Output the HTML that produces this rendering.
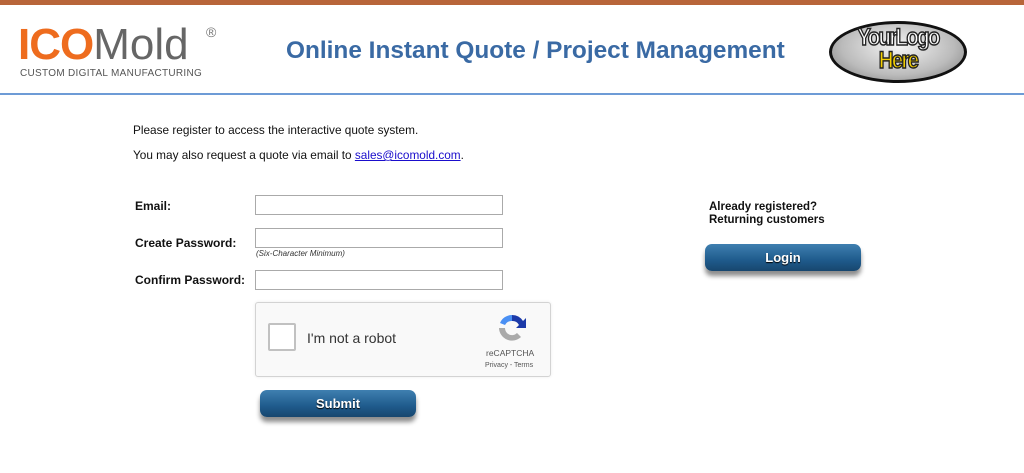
<!DOCTYPE html>
<html><head><style>
body{margin:0;width:1024px;height:473px;background:#fff;font-family:"Liberation Sans",Arial,sans-serif;position:relative;overflow:hidden}
.a{position:absolute}
.top{left:0;top:0;width:1024px;height:5px;background:#b8653a}
.hl{left:0;top:93px;width:1024px;height:2px;background:#6d9bd6}
.t{font-size:11.8px;color:#111}
.lb{font-size:12px;font-weight:bold;color:#111}
.in{width:246px;height:18px;border:1px solid #aaa;background:#fff}
.btn{background:linear-gradient(#3f7fb0,#1f5b8c 60%,#17466e);border-radius:7px;color:#fff;font-weight:bold;font-size:13px;text-align:center;box-shadow:0 5px 5px rgba(0,0,0,.45);text-shadow:0 1px 1px #000}
</style></head><body>
<div class="a top"></div>
<div class="a" style="left:18px;top:23px;font-size:44px;line-height:44px;white-space:nowrap"><span style="color:#ee6c1e;font-weight:bold;letter-spacing:-1px">ICO</span><span style="color:#666;letter-spacing:0px">Mold</span></div>
<div class="a" style="left:206px;top:24px;font-size:14px;color:#777">®</div>
<div class="a" style="left:20px;top:68px;font-size:10px;color:#555;letter-spacing:0.3px;white-space:nowrap">CUSTOM DIGITAL MANUFACTURING</div>
<div class="a" style="left:286px;top:37px;font-size:24.4px;font-weight:bold;color:#3a6aa4;white-space:nowrap">Online Instant Quote / Project Management</div>
<div class="a" style="left:829px;top:21px;width:138px;height:62px;border-radius:50%;background:radial-gradient(ellipse at 50% 40%,#f4f4f4,#bbb 60%,#777);border:3px solid #111;box-sizing:border-box"></div>
<div class="a" style="left:829px;top:26px;width:138px;text-align:center;font-weight:bold;font-size:24px;line-height:23px;color:#fff;-webkit-text-stroke:1.5px #222;letter-spacing:-2px;transform:scaleX(0.85)">YourLogo<br><span style="color:#f5d000">Here</span></div>
<div class="a hl"></div>
<div class="a t" style="left:133px;top:123px">Please register to access the interactive quote system.</div>
<div class="a t" style="left:133px;top:148px">You may also request a quote via email to <span style="color:#1a0dcc;text-decoration:underline">sales@icomold.com</span>.</div>
<div class="a lb" style="left:135px;top:199px">Email:</div>
<div class="a in" style="left:255px;top:195px"></div>
<div class="a lb" style="left:135px;top:236px">Create Password:</div>
<div class="a in" style="left:255px;top:228px"></div>
<div class="a" style="left:256px;top:249px;font-size:8px;font-style:italic;color:#333">(Six-Character Minimum)</div>
<div class="a lb" style="left:135px;top:273px">Confirm Password:</div>
<div class="a in" style="left:255px;top:270px"></div>
<div class="a" style="left:255px;top:302px;width:294px;height:73px;background:#f9f9f9;border:1px solid #d3d3d3;border-radius:3px;box-shadow:0 0 3px rgba(0,0,0,.08)"></div>
<div class="a" style="left:268px;top:323px;width:24px;height:24px;border:2px solid #c1c1c1;border-radius:2px;background:#fff"></div>
<div class="a" style="left:307px;top:330px;font-size:14px;color:#333">I'm not a robot</div>
<svg class="a" style="left:496px;top:312px" width="32" height="32" viewBox="0 0 32 32"><path d="M16 3a13 13 0 0 1 11 6l3-3v10h-10l3-3a7 7 0 0 0-7-4z" fill="#1c3aa9"/><path d="M16 3A13 13 0 0 0 4 11l5 2a7 7 0 0 1 7-4z" fill="#4a90f4"/><path d="M3 16a13 13 0 0 0 22 9l-4-4a7 7 0 0 1-12-5H3z" fill="#aaa"/></svg>
<div class="a" style="left:486px;top:348px;font-size:8.5px;color:#555">reCAPTCHA</div>
<div class="a" style="left:485px;top:362px;font-size:7px;color:#555">Privacy - Terms</div>
<div class="a btn" style="left:260px;top:390px;width:156px;height:27px;line-height:27px">Submit</div>
<div class="a lb" style="left:709px;top:201px;font-size:11.5px;line-height:13px">Already registered?<br>Returning customers</div>
<div class="a btn" style="left:705px;top:244px;width:156px;height:27px;line-height:27px">Login</div>
</body></html>
